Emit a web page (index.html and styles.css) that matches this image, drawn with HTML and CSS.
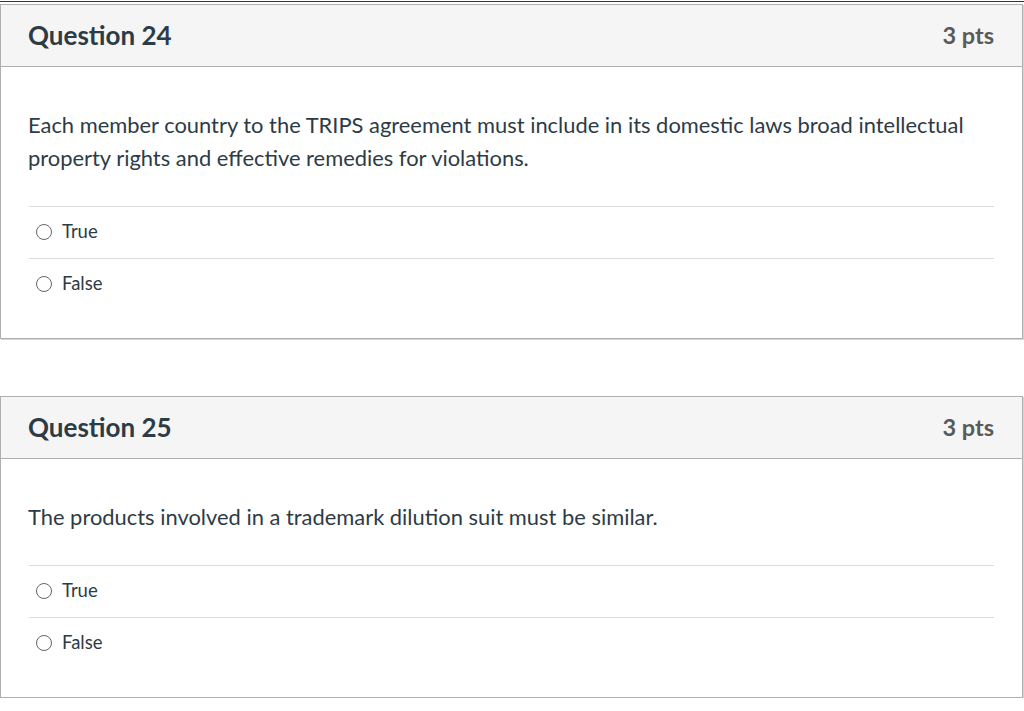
FILE: index.html
```html
<!DOCTYPE html>
<html lang="en">
<head>
    <meta charset="UTF-8">
    <meta name="viewport" content="width=device-width, initial-scale=1.0">
    <title>Quiz</title>
    <link rel="stylesheet" href="styles.css">
</head>
<body>
    <div class="top-rule"></div>

    <div class="question">
        <div class="question-header">
            <h2>Question 24</h2>
            <span class="points">3 pts</span>
        </div>
        <div class="question-body">
            <p>Each member country to the TRIPS agreement must include in its domestic laws broad intellectual property rights and effective remedies for violations.</p>
            <div class="answers">
                <label class="answer"><span class="radio"></span>True</label>
                <label class="answer"><span class="radio"></span>False</label>
            </div>
        </div>
    </div>

    <div class="question">
        <div class="question-header">
            <h2>Question 25</h2>
            <span class="points">3 pts</span>
        </div>
        <div class="question-body">
            <p>The products involved in a trademark dilution suit must be similar.</p>
            <div class="answers">
                <label class="answer"><span class="radio"></span>True</label>
                <label class="answer"><span class="radio"></span>False</label>
            </div>
        </div>
    </div>
</body>
</html>
```
FILE: styles.css
```css
body {
    font-family: Lato, "Open Sans", sans-serif;
    color: #2d3b45;
    background: #fff;
    margin: 0;
    padding: 0;
    overflow: hidden;
}

.top-rule {
    height: 1px;
    margin-top: 1px;
    background: #333;
}

.question {
    width: 1021px;
    margin-top: 2px;
    margin-bottom: 57px;
    border: 1px solid #b0b0b0;
    box-shadow: 1px 1px 0 #d4d4d4;
    background: #fff;
}

.question:last-child {
    margin-bottom: 0;
}

.question-header {
    display: flex;
    justify-content: space-between;
    align-items: center;
    height: 61px;
    padding: 0 28px 2px 27px;
    box-sizing: border-box;
    height: 62px;
    background: #f5f5f5;
    border-bottom: 1px solid #b0b0b0;
}

.question-header h2 {
    margin: 0;
    font-size: 26px;
    font-weight: 700;
}

.points {
    font-size: 23.5px;
    font-weight: 700;
    color: #5a5a5a;
}

.question-body {
    padding: 41px 28px 28px;
}

.question-body p {
    margin: 0 0 32px -1px;
    font-size: 21.9px;
    line-height: 33px;
}

.answer {
    display: flex;
    align-items: center;
    height: 51px;
    padding-bottom: 3px;
    box-sizing: border-box;
    height: 52px;
    border-top: 1px solid #dcdcdc;
    padding-left: 7px;
    font-size: 18.5px;
}

.radio {
    width: 14px;
    height: 14px;
    border: 1px solid #666;
    border-radius: 50%;
    margin-right: 10px;
    margin-top: 2px;
}
```
